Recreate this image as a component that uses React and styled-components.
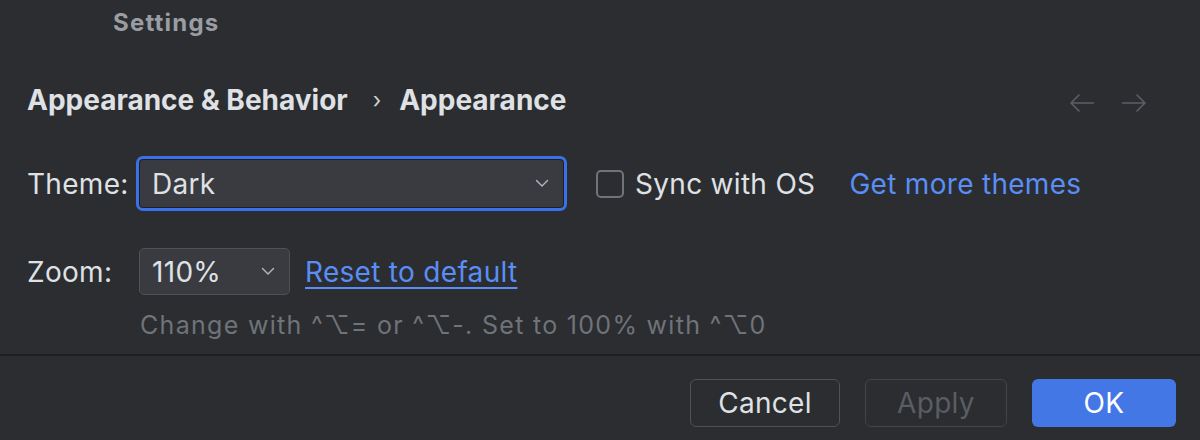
import React from 'react';
import styled, { createGlobalStyle } from 'styled-components';

const GlobalStyle = createGlobalStyle`
  html, body {
    margin: 0;
    padding: 0;
    background: #2b2d30;
  }
  body {
    font-family: Inter, "Noto Sans", "Liberation Sans", sans-serif;
    color: #dfe1e5;
    overflow: hidden;
  }
`;

const Chevron = ({ size = 14 }) => (
  <svg width={size} height={size / 2 + 2} viewBox="0 0 14 9" fill="none">
    <path d="M1.5 1.5L7 7L12.5 1.5" stroke="#b4b8bf" strokeWidth="1.4" strokeLinecap="round" strokeLinejoin="round" />
  </svg>
);

const Arrow = ({ dir }) => (
  <svg width="26" height="20" viewBox="0 0 26 20" fill="none">
    {dir === 'left' ? (
      <path d="M24.5 10H2M10 2L2 10L10 18" stroke="#5c5f65" strokeWidth="1.6" strokeLinecap="round" strokeLinejoin="round" />
    ) : (
      <path d="M1.5 10H24M16 2L24 10L16 18" stroke="#5c5f65" strokeWidth="1.6" strokeLinecap="round" strokeLinejoin="round" />
    )}
  </svg>
);

const App = () => {
  return (
    <Window>
      <GlobalStyle />
      <TitleBar>Settings</TitleBar>
      <Content>
        <HeaderRow>
          <Breadcrumb>
            <span>Appearance &amp; Behavior</span>
            <Separator>›</Separator>
            <span>Appearance</span>
          </Breadcrumb>
          <NavArrows>
            <Arrow dir="left" />
            <Arrow dir="right" />
          </NavArrows>
        </HeaderRow>

        <Form>
          <Label>Theme:</Label>
          <Row gap={32}>
            <Combo width={425} height={49} focused>
              <span>Dark</span>
              <Chevron />
            </Combo>
            <CheckLabel>
              <CheckBox />
              Sync with OS
            </CheckLabel>
            <Link>Get more themes</Link>
          </Row>

          <Label>Zoom:</Label>
          <Row gap={15}>
            <Combo width={151} height={47}>
              <span>110%</span>
              <Chevron />
            </Combo>
            <Link underline>Reset to default</Link>
          </Row>

          <span />
          <Hint>Change with ^⌥= or ^⌥-. Set to 100% with ^⌥0</Hint>
        </Form>
      </Content>

      <Divider />

      <Footer>
        <Button width={150}>Cancel</Button>
        <Button width={142} disabled>Apply</Button>
        <Button width={144} primary>OK</Button>
      </Footer>
    </Window>
  );
};

const Window = styled.div`
  width: 1200px;
  height: 440px;
  display: flex;
  flex-direction: column;
  background: #2b2d30;
`;

const TitleBar = styled.div`
  height: 44px;
  display: flex;
  align-items: center;
  padding-left: 113px;
  font-size: 24px;
  font-weight: 700;
  letter-spacing: 1.2px;
  color: #9a9da3;
`;

const Content = styled.div`
  flex: 1;
  padding: 0 27px;
  display: flex;
  flex-direction: column;
`;

const HeaderRow = styled.div`
  height: 44px;
  margin-top: 34px;
  display: flex;
  align-items: center;
  justify-content: space-between;
`;

const Breadcrumb = styled.div`
  display: flex;
  align-items: center;
  font-size: 28px;
  font-weight: 700;
  color: #dfe1e5;
`;

const Separator = styled.span`
  font-weight: 400;
  font-size: 22px;
  margin: 0 18px 0 25px;
  color: #cfd1d6;
`;

const NavArrows = styled.div`
  display: flex;
  gap: 26px;
  margin-right: 26px;
  padding-top: 6px;
`;

const Form = styled.div`
  margin-top: 37px;
  display: grid;
  grid-template-columns: 112px 1fr;
  row-gap: 40px;
  align-items: center;
  font-size: 28px;
  letter-spacing: 0.3px;
  & > :nth-child(5),
  & > :nth-child(6) {
    margin-top: -25px;
  }
`;

const Label = styled.span`
  color: #dfe1e5;
`;

const Row = styled.div`
  display: flex;
  align-items: center;
  gap: ${(p) => p.gap}px;
`;

const Combo = styled.div`
  box-sizing: border-box;
  width: ${(p) => p.width}px;
  height: ${(p) => p.height}px;
  display: flex;
  align-items: center;
  justify-content: space-between;
  padding: 0 14px 0 12px;
  background: #393b40;
  border: 1px solid ${(p) => (p.focused ? '#1e1f22' : '#4e5157')};
  border-radius: ${(p) => (p.focused ? 4 : 5)}px;
  outline: ${(p) => (p.focused ? '3px solid #3b71e8' : 'none')};
  color: #dfe1e5;
`;

const CheckLabel = styled.label`
  display: flex;
  align-items: center;
  gap: 11px;
  color: #dfe1e5;
`;

const CheckBox = styled.span`
  box-sizing: border-box;
  width: 28px;
  height: 28px;
  border: 2px solid #6f737a;
  border-radius: 5px;
`;

const Link = styled.span`
  color: #5a8ef5;
  margin-left: ${(p) => (p.underline ? 0 : 2)}px;
  text-decoration: ${(p) => (p.underline ? 'underline' : 'none')};
  text-underline-offset: 5px;
  text-decoration-thickness: 2px;
`;

const Hint = styled.span`
  font-size: 25px;
  letter-spacing: 1.3px;
  color: #6f737a;
  padding-left: 1px;
`;

const Divider = styled.div`
  height: 2px;
  background: #1e1f22;
  margin-bottom: 23px;
`;

const Footer = styled.div`
  display: flex;
  justify-content: flex-end;
  gap: 25px;
  padding: 0 24px 13px 0;
`;

const Button = styled.button`
  box-sizing: border-box;
  width: ${(p) => p.width}px;
  height: 48px;
  border-radius: 6px;
  font-family: inherit;
  font-size: 28px;
  letter-spacing: 0.3px;
  border: ${(p) => (p.primary ? 'none' : '1.5px solid #4e5157')};
  background: ${(p) => (p.primary ? '#4477e6' : 'transparent')};
  color: ${(p) => (p.primary ? '#ffffff' : p.disabled ? '#5a5d63' : '#dfe1e5')};
  &:disabled {
    border-color: #43454a;
  }
`;

export default App;
